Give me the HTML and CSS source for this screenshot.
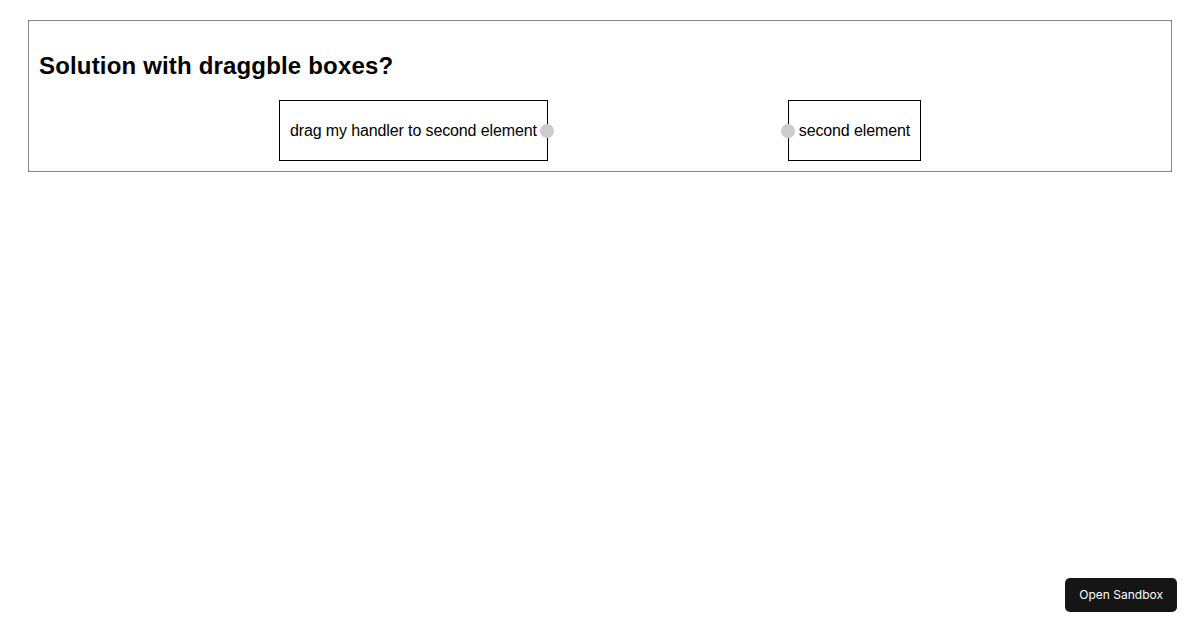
FILE: index.html
```html
<!DOCTYPE html>
<html lang="en">

<head>
    <meta charset="UTF-8">
    <meta name="viewport" content="width=device-width, initial-scale=1.0">
    <title>Draggable boxes</title>
    <link rel="stylesheet" href="styles.css">
</head>

<body>
    <div class="wrapper">
        <h2>Solution with draggble boxes?</h2>
        <div class="boxes">
            <div class="box">
                drag my handler to second element
                <span class="handle handle-right"></span>
            </div>
            <div class="box">
                <span class="handle handle-left"></span>
                second element
            </div>
        </div>
    </div>

    <a class="sandbox-btn" href="#">Open Sandbox</a>
</body>

</html>
```

FILE: styles.css
```css
body {
    font-family: "Liberation Sans", Arial, sans-serif;
    margin: 0;
    color: #000;
}

.wrapper {
    margin: 20px 28px;
    padding: 10px;
    border: 1px solid #888;
}

.wrapper h2 {
    font-size: 24px;
    letter-spacing: 0.17px;
    margin: 21px 0 20px;
}

.boxes {
    display: flex;
    justify-content: space-evenly;
    align-items: flex-start;
}

.box {
    position: relative;
    border: 1px solid black;
    padding: 20px 10px;
    font-size: 16px;
    line-height: 19px;
    letter-spacing: -0.12px;
}

.handle {
    position: absolute;
    top: 50%;
    width: 14px;
    height: 14px;
    margin-top: -7px;
    border-radius: 50%;
    background-color: #ccc;
}

.handle-right {
    right: -7px;
}

.handle-left {
    left: -8px;
}

.sandbox-btn {
    position: fixed;
    right: 23px;
    bottom: 18px;
    padding: 0 14px;
    height: 34px;
    line-height: 34px;
    border-radius: 5px;
    background-color: #151515;
    color: #fff;
    font-family: Inter, "Noto Sans", sans-serif;
    font-size: 12px;
    text-decoration: none;
}
```
